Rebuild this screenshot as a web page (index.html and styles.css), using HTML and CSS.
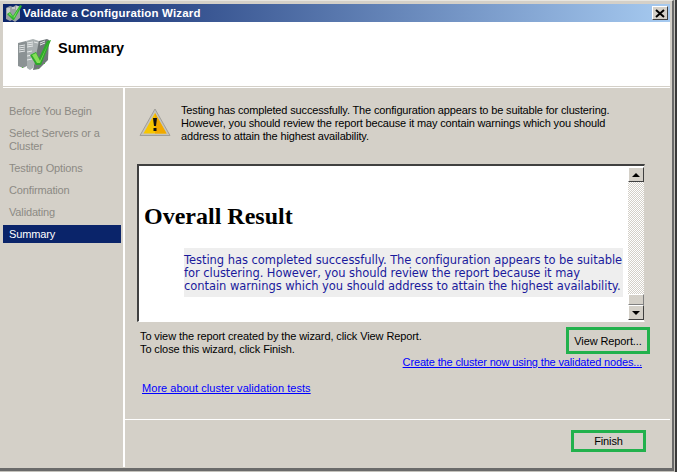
FILE: index.html
```html
<!DOCTYPE html>
<html lang="en">
<head>
<meta charset="utf-8">
<title>Validate a Configuration Wizard</title>
<link rel="stylesheet" href="styles.css">
</head>
<body>
<div class="window">
  <div class="titlebar">
    <svg class="title-icon" width="16" height="17" viewBox="0 0 16 17">
      <path d="M0 3l4-2 3 1 3-2 4 2v11l-5 4-3-2-2 1-4-2z" fill="#9aa1a3"/>
      <path d="M1 4h3M1 6h3M1 8h3M6 3h3M10 2h3M10 4h3" stroke="#eef0f0" fill="none"/>
      <path d="M1 9l3-2 3 4 7-11 2 1-8 14H7z" fill="#2eb52c"/>
      <path d="M2.500 9l1.500-1 3 4.500L14 1.500 8.500 12.500h-1.500z" fill="#7fe060"/>
    </svg>
    <span class="title-text">Validate a Configuration Wizard</span>
    <span class="close"><svg width="10" height="9" viewBox="0 0 10 9"><path d="M1 1l8 7M9 1L1 8" stroke="#000" stroke-width="2" fill="none"/></svg></span>
  </div>
  <header class="banner">
    <svg class="banner-icon" width="34" height="33" viewBox="0 0 34 33">
      <path d="M1 5l8-2 1 1v24l-4 2-5-2z" fill="#8b9294"/>
      <path d="M9 3l7-2 6 2v7l-6 20-3 2-3-2V5z" fill="#a9b0b1"/>
      <path d="M22 3l8-2 2 1-1 20-9 9-6 1z" fill="#6f7678"/>
      <path d="M2 8l6-1M2 10l6-1M2 12l6-1M2 14l6-1M10 5l6-1M10 7l6-1M10 9l6-1M10 14l5-1M10 18l5-1M10 22l5-1M17 4l4 1M23 5l5-2M23 7l5-2" stroke="#e6e9e9" fill="none"/>
      <path d="M13 17l6-3 3 6L30 3l4-1-10 25h-5z" fill="#2eaa2a"/>
      <path d="M15 17l4-2 4 8L32 4l-9 21h-3z" fill="#86de58"/>
      <path d="M5 29h1v1H5zM20 30h1v1h-1zM27 25h1v1h-1z" fill="#55c040"/>
    </svg>
    <h1 class="banner-title">Summary</h1>
  </header>
  <div class="rule"></div>
  <div class="main">
    <nav class="steps">
      <div class="step">Before You Begin</div>
      <div class="step">Select Servers or a<br>Cluster</div>
      <div class="step">Testing Options</div>
      <div class="step">Confirmation</div>
      <div class="step">Validating</div>
      <div class="step current">Summary</div>
    </nav>
    <div class="content">
      <div class="body">
        <div class="message">
          <svg class="warn" width="32" height="29" viewBox="0 0 32 29">
            <path d="M16 1L31 27.500H1z" fill="#c4c2bc" stroke="#a09e98"/>
            <path d="M16 5L27.500 25.500H4.500z" fill="#f7c600"/>
            <path d="M16 5L27.500 25.500H16z" fill="#f1a800"/>
            <path d="M14 10h4l-1 8h-2z" fill="#111"/>
            <rect x="14.500" y="20" width="3" height="3" fill="#111"/>
          </svg>
          <p class="message-text">Testing has completed successfully. The configuration appears to be suitable for clustering.<br>However, you should review the report because it may contain warnings which you should<br>address to attain the highest availability.</p>
        </div>
        <div class="report">
          <div class="report-page">
            <h2 class="report-heading">Overall Result</h2>
            <p class="report-note">Testing has completed successfully. The configuration appears to be suitable<br>for clustering. However, you should review the report because it may<br>contain warnings which you should address to attain the highest availability.</p>
          </div>
          <div class="scrollbar">
            <span class="sb-btn"><i class="arrow up"></i></span>
            <span class="sb-track"></span>
            <span class="sb-thumb"></span>
            <span class="sb-btn"><i class="arrow down"></i></span>
          </div>
        </div>
        <div class="actions">
          <p class="hint">To view the report created by the wizard, click View Report.<br>To close this wizard, click Finish.</p>
          <span class="btn view">View Report...</span>
        </div>
        <div class="create-row"><a class="link create" href="#">Create the cluster now using the validated nodes...</a></div>
        <a class="link more" href="#">More about cluster validation tests</a>
      </div>
      <footer class="footer"><span class="btn finish">Finish</span></footer>
    </div>
  </div>
</div>
</body>
</html>
```
FILE: styles.css
```css
* { box-sizing: border-box; }
html, body { margin: 0; padding: 0; }
body {
  width: 677px; height: 472px; overflow: hidden;
  background: #c4c2bc;
  border-right: 2px solid #3a3a3a;
  font-family: "Liberation Sans", Arial, sans-serif; font-size: 11px;
}
p, h1, h2 { margin: 0; }

.window {
  width: 674px; height: 471px;
  display: flex; flex-direction: column;
  padding: 3px 2px 1px 3px;
  border-top: 1px solid #e8e6e0;
  border-right: 2px solid #6a6a6a;
  border-bottom: 3px solid #6a6a6a;
  background: #d4d0c8;
}

.titlebar {
  height: 18px; flex: none;
  display: flex; align-items: center;
  padding: 0 2px 0 3px;
  background: linear-gradient(90deg, #0a246a, #a6caf0);
  color: #fff; font-weight: bold; font-size: 11.500px;
}
.title-icon { margin-right: 1px; flex: none; }
.title-text { flex: 1; letter-spacing: .17px; }
.close {
  width: 16px; height: 14px;
  display: flex; align-items: center; justify-content: center;
  background: #d4d0c8;
  border: 1px solid; border-color: #fff #404040 #404040 #fff;
}

.banner {
  height: 64px; flex: none; background: #fff;
  display: flex; align-items: flex-start;
  padding: 16px 0 0 14px;
}
.banner-icon { flex: none; }
.banner-title { font-size: 14.500px; line-height: 16px; font-weight: bold; margin: 2px 0 0 7px; color: #000; }

.rule { height: 2px; flex: none; background: #fff; border-top: 1px solid #d4d0c8; }

.main { flex: 1; display: flex; min-height: 0; margin-left: -2px; }

.steps { width: 122px; flex: none; padding: 15px 0 0 0; color: #8c8a84; font-size: 11px; line-height: 13px; }
.step { padding: 2px 0 2px 8px; margin-bottom: 5px; letter-spacing: -.15px; }
.step.current { background: #0a246a; color: #fff; width: 118px; margin: -1px 0 0 2px; padding: 3px 0 2px 6px; }

.content { flex: 1; display: flex; flex-direction: column; border-left: 2px solid #fff; min-width: 0; }
.body { flex: 1; padding: 13px 0 0 12px; }

.message { display: flex; height: 63px; }
.warn { margin: 7px 0 0 2px; flex: none; }
.message-text { margin: 3px 0 0 10px; font-size: 11px; line-height: 13px; color: #000; letter-spacing: -.15px; white-space: nowrap; }

.report {
  width: 508px; height: 158px;
  display: flex;
  border: 1px solid; border-color: #404040 #d4d0c8 #fff #404040;
  border-width: 2px 1px 1px 2px;
  background: #fff;
}
.report-page { flex: 1; padding: 37px 0 0 5px; min-width: 0; }
.report-heading { font-family: "Liberation Serif", "Times New Roman", serif; font-size: 24px; line-height: 27px; font-weight: bold; color: #000; }
.report-note {
  margin: 18px 0 0 40px; width: 439px;
  background: #eeeeee; color: #1a1a9c;
  font-family: "DejaVu Sans", Verdana, sans-serif; font-size: 11.500px; line-height: 13px;
  white-space: nowrap; padding: 6px 0 4px;
  letter-spacing: -.05px;
}
.scrollbar { width: 16px; flex: none; display: flex; flex-direction: column; padding: 1px 0; }
.sb-btn, .sb-thumb {
  height: 15px; flex: none; display: flex; align-items: center; justify-content: center;
  background: #d4d0c8;
  border: 1px solid; border-color: #fff #404040 #404040 #fff;
}
.sb-thumb { height: 11px; border-color: #fff #808080 #808080 #fff; }
.sb-track { flex: 1; background: repeating-conic-gradient(#d4d0c8 0 25%, #fff 0 50%) 0 0 / 2px 2px; }
.arrow { width: 0; height: 0; border-left: 4px solid transparent; border-right: 4px solid transparent; }
.arrow.up { border-bottom: 4px solid #000; }
.arrow.down { border-top: 4px solid #000; }

.actions { width: 513px; height: 31px; display: flex; justify-content: space-between; align-items: flex-start; margin-top: 3px; }
.hint { margin: 5px 0 0 3px; font-size: 11px; line-height: 13px; letter-spacing: -.1px; white-space: nowrap; }
.btn { display: flex; align-items: center; justify-content: center; border: 3px solid #22b14c; color: #000; font-size: 11px; letter-spacing: -.1px; }
.view { width: 84px; height: 27px; margin-top: 2px; }
.link { color: #0000ff; text-decoration: underline; font-size: 11px; white-space: nowrap; }
.create-row { width: 505px; height: 13px; line-height: 13px; text-align: right; }
.create { letter-spacing: -.15px; }
.more { display: block; margin: 12px 0 0 5px; line-height: 14px; letter-spacing: .05px; }

.footer { height: 48px; flex: none; border-top: 1px solid #fff; display: flex; justify-content: flex-end; padding: 10px 24px 0 0; }
.finish { width: 75px; height: 22px; }
```
